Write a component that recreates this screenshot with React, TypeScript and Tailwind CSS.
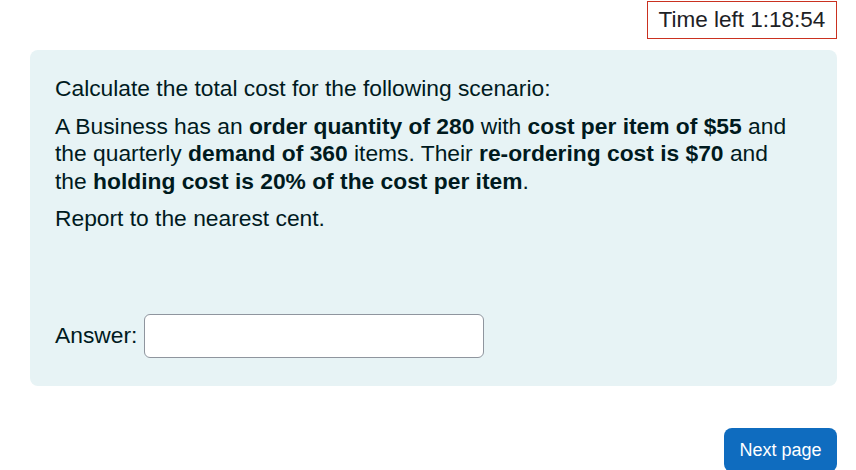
import React from "react";

export default function App() {
  return (
    <div
      className="w-[856px] h-[470px] bg-white overflow-hidden text-[#001a1e]"
      style={{ fontFamily: '"Liberation Sans", Arial, sans-serif' }}
    >
      <div className="flex justify-end pr-[19px] pt-[1px]">
        <div className="h-[38px] w-[190px] border border-[#ca3120] flex items-center justify-center text-[22.5px] text-[#1d2125]">
          Time left 1:18:54
        </div>
      </div>
      <div className="mt-[11px] ml-[30px] w-[807px] h-[336px] bg-[#e7f3f5] rounded-[8px] pl-[25px] pr-[40px] pt-[25px] flex flex-col">
        <p className="text-[22.8px] leading-[27.5px]">Calculate the total cost for the following scenario:</p>
        <p className="text-[22.8px] leading-[27.5px] mt-[10px]">
          A Business has an <b>order quantity of 280</b> with <b>cost per item of $55</b> and the quarterly{" "}
          <b>demand of 360</b> items. Their <b>re-ordering cost is $70</b> and the{" "}
          <b>holding cost is 20% of the cost per item</b>.
        </p>
        <p className="text-[22.8px] leading-[27.5px] mt-[10px]">Report to the nearest cent.</p>
        <div className="flex items-center mt-[81px]">
          <span className="text-[22.8px] mr-[7px]">Answer:</span>
          <input
            type="text"
            className="w-[340px] h-[44px] bg-white border border-[#8f959e] rounded-[6px] outline-none"
          />
        </div>
      </div>
      <div className="flex justify-end pr-[19px] mt-[42px]">
        <button className="w-[113px] h-[44px] bg-[#0f6cbf] text-white rounded-[8px] text-[18px]">
          Next page
        </button>
      </div>
    </div>
  );
}
